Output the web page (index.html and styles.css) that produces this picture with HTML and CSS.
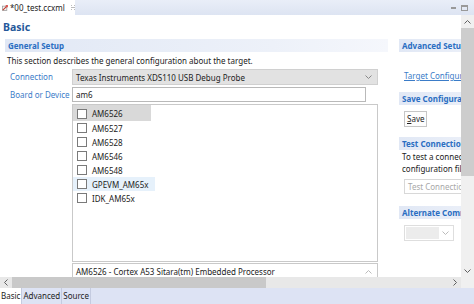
FILE: index.html
```html
<!DOCTYPE html>
<html lang="en">
<head>
    <meta charset="UTF-8">
    <title>*00_test.ccxml</title>
    <link rel="stylesheet" href="styles.css">
</head>
<body>
    <!-- Pestaña del editor -->
    <div class="editor-tabs">
        <div class="editor-tab">
            <svg class="file-icon" width="8" height="8" viewBox="0 0 8 8">
                <rect x="0.5" y="1.5" width="6" height="6" fill="#f3f3f3" stroke="#999"/>
                <path d="M1 7 L6 2" stroke="#c0392b" stroke-width="1.4"/>
                <rect x="5" y="0" width="3" height="3" fill="#d9534f"/>
            </svg>
            <span>*00_test.ccxml</span>
            <span class="tab-close"></span>
        </div>
        <div class="tab-fill"></div>
        <div class="win-buttons">
            <span class="win-min"></span>
            <span class="win-max"></span>
        </div>
    </div>

    <div class="main">
        <div class="content">
            <div class="left-col">
                <div class="page-title">Basic</div>
                <div class="section">
                    <div class="section-header">General Setup</div>
                    <div class="section-desc">This section describes the general configuration about the target.</div>
                    <div class="form">
                        <label class="form-label">Connection</label>
                        <div class="combo">
                            <span>Texas Instruments XDS110 USB Debug Probe</span>
                            <svg width="7" height="4" viewBox="0 0 7 4"><path d="M0.5 0.5 L3.5 3.5 L6.5 0.5" fill="none" stroke="#888"/></svg>
                        </div>
                        <label class="form-label">Board or Device</label>
                        <div class="input-wrap"><div class="text-input">am6</div></div>
                        <div></div>
                        <div class="device-list">
                            <div class="device selected"><span class="check"></span>AM6526</div>
                            <div class="device"><span class="check"></span>AM6527</div>
                            <div class="device"><span class="check"></span>AM6528</div>
                            <div class="device"><span class="check"></span>AM6546</div>
                            <div class="device"><span class="check"></span>AM6548</div>
                            <div class="device hover"><span class="check"></span>GPEVM_AM65x</div>
                            <div class="device"><span class="check"></span>IDK_AM65x</div>
                        </div>
                        <div></div>
                        <div class="device-desc">
                            <span>AM6526 - Cortex A53 Sitara(tm) Embedded Processor</span>
                            <svg width="7" height="4" viewBox="0 0 7 4"><path d="M0.5 3.5 L3.5 0.5 L6.5 3.5" fill="none" stroke="#bbb"/></svg>
                        </div>
                    </div>
                </div>
            </div>

            <div class="right-col">
                <div class="side-header first">Advanced Setup</div>
                <a class="side-link">Target Configuration</a>
                <div class="side-header">Save Configuration</div>
                <div class="side-body save-body">
                    <button class="btn"><u>S</u>ave</button>
                </div>
                <div class="side-header">Test Connection</div>
                <div class="side-text">To test a connection, all changes must have been saved,<br>configuration file contains no errors</div>
                <div class="side-body test-body">
                    <div class="btn-disabled">Test Connection</div>
                </div>
                <div class="side-header">Alternate Communication</div>
                <div class="side-body alt-body">
                    <div class="combo-disabled">
                        <span class="combo-disabled-field"></span>
                        <svg width="7" height="4" viewBox="0 0 7 4"><path d="M0.5 0.5 L3.5 3.5 L6.5 0.5" fill="none" stroke="#bbb"/></svg>
                    </div>
                </div>
            </div>
        </div>

        <!-- Barra de desplazamiento vertical -->
        <div class="vscroll">
            <svg class="arrow" width="7" height="4" viewBox="0 0 7 4"><path d="M0.5 3.5 L3.5 0.5 L6.5 3.5" fill="none" stroke="#606060"/></svg>
            <div class="vthumb"></div>
            <div class="vtrack"></div>
            <svg class="arrow" width="7" height="4" viewBox="0 0 7 4"><path d="M0.5 0.5 L3.5 3.5 L6.5 0.5" fill="none" stroke="#606060"/></svg>
        </div>
    </div>

    <!-- Barra de desplazamiento horizontal -->
    <div class="hscroll">
        <span class="harrow"><svg width="4" height="7" viewBox="0 0 4 7"><path d="M3.5 0.5 L0.5 3.5 L3.5 6.5" fill="none" stroke="#606060"/></svg></span>
        <div class="hthumb"></div>
        <div class="htrack"></div>
        <span class="harrow"><svg width="4" height="7" viewBox="0 0 4 7"><path d="M0.5 0.5 L3.5 3.5 L0.5 6.5" fill="none" stroke="#606060"/></svg></span>
        <div class="hcorner"></div>
    </div>

    <!-- Pestañas inferiores -->
    <div class="page-tabs">
        <div class="page-tab active">Basic</div>
        <div class="page-tab">Advanced</div>
        <div class="page-tab">Source</div>
    </div>
</body>
</html>
```

FILE: styles.css
```css
/* Estilos base */
body {
    margin: 0;
    padding: 0;
    width: 474px;
    height: 304px;
    overflow: hidden;
    background: #fff;
    font-family: "Noto Sans", "Open Sans", sans-serif;
    font-size: 8px;
    color: #222;
}

/* Pestaña del editor */
.editor-tabs {
    display: flex;
    height: 15px;
    background: linear-gradient(#e9eef8, #dde4f2);
}

.editor-tab {
    display: flex;
    align-items: center;
    gap: 2px;
    width: 75px;
    padding-left: 2px;
    box-sizing: border-box;
    background: #fff;
}

.tab-close {
    width: 5px;
    height: 5px;
    margin-left: 4px;
    border-left: 1px dotted #bbb;
    border-right: 1px dotted #bbb;
    box-sizing: border-box;
    background: linear-gradient(#bbb, #bbb) center / 5px 1px no-repeat;
}

.tab-fill {
    flex: 1;
}

.win-buttons {
    display: flex;
    align-items: center;
    gap: 5px;
    padding-right: 6px;
}

.win-min {
    width: 5px;
    height: 2px;
    border-top: 1px solid #999;
    border-bottom: 1px solid #999;
    box-sizing: border-box;
}

.win-max {
    width: 7px;
    height: 6px;
    border: 1px solid #999;
    border-top-width: 2px;
    box-sizing: border-box;
}

/* Contenedor principal */
.main {
    display: flex;
    height: 262px;
}

.content {
    flex: 1;
    display: flex;
    overflow: hidden;
}

.left-col {
    width: 388px;
    flex-shrink: 0;
}

.page-title {
    height: 24px;
    padding: 5px 0 0 3px;
    box-sizing: border-box;
    font-size: 10.5px;
    font-weight: bold;
    color: #24589a;
    line-height: 14px;
}

.section {
    margin-left: 5px;
}

.section-header,
.side-header {
    height: 13px;
    line-height: 13px;
    padding-left: 3px;
    font-weight: bold;
    color: #2a6ec2;
    background: linear-gradient(to right, #e1e8f5, #edf1f9 70%, #f5f7fc);
    white-space: nowrap;
}

.section-desc {
    padding: 3px 0 0 2px;
    height: 17px;
    box-sizing: border-box;
    line-height: 12px;
    white-space: nowrap;
}

/* Formulario */
.form {
    display: grid;
    grid-template-columns: 67px 306px;
    row-gap: 2px;
}

.form-label {
    padding-left: 5px;
    color: #3b7cc8;
    line-height: 15px;
    white-space: nowrap;
}

.combo {
    display: flex;
    align-items: center;
    justify-content: space-between;
    height: 16px;
    padding: 0 5px 0 3px;
    background: #e2e2e2;
    border: 1px solid #d0d0d0;
    box-sizing: border-box;
}

.input-wrap {
    padding-right: 12px;
}

.text-input {
    height: 15px;
    line-height: 13px;
    padding-left: 3px;
    border: 1px solid #b9b9b9;
    box-sizing: border-box;
}

.device-list {
    height: 158px;
    border: 1px solid #c9c9c9;
    box-sizing: border-box;
}

.device {
    display: flex;
    align-items: center;
    width: 78px;
    height: 14px;
    padding-left: 4px;
    gap: 5px;
}

.device.selected {
    background: #d9d9d9;
    height: 16px;
    padding-top: 1px;
    box-sizing: border-box;
}

.device.hover {
    background: #e6f1fb;
}

.check {
    width: 10px;
    height: 10px;
    border: 1px solid #7a7a7a;
    background: #fff;
    box-sizing: border-box;
}

.device-desc {
    display: flex;
    align-items: center;
    justify-content: space-between;
    height: 16px;
    margin-top: -1px;
    padding: 0 5px 0 3px;
    border: 1px solid #c9c9c9;
    border-bottom: none;
    box-sizing: border-box;
    white-space: nowrap;
}

/* Columna derecha */
.right-col {
    flex-shrink: 0;
    width: 120px;
    margin-left: 11px;
    white-space: nowrap;
}

.side-header.first {
    margin-top: 24px;
}

.side-link {
    display: block;
    height: 40px;
    padding: 18px 0 0 5px;
    box-sizing: border-box;
    line-height: 12px;
    color: #3b7cc8;
    text-decoration: underline;
}

.side-body {
    padding-left: 5px;
}

.save-body {
    padding-top: 6px;
    padding-bottom: 10px;
}

.btn {
    display: block;
    font-family: inherit;
    font-size: 8px;
    height: 16px;
    padding: 0 2px;
    line-height: 12px;
    background: #fdfdfd;
    border: 1px solid #c6c6c6;
    color: #222;
}

.side-text {
    padding: 1px 0 0 3px;
    line-height: 12px;
}

.test-body {
    padding-top: 4px;
    padding-bottom: 12px;
}

.btn-disabled {
    width: 110px;
    height: 15px;
    line-height: 13px;
    padding-left: 3px;
    border: 1px solid #d8d8d8;
    box-sizing: border-box;
    color: #a8a8a8;
}

.alt-body {
    padding-top: 6px;
}

.combo-disabled {
    display: flex;
    align-items: center;
    width: 50px;
    height: 16px;
    border: 1px solid #dedede;
    box-sizing: border-box;
    gap: 3px;
    padding: 1px 4px 1px 1px;
}

.combo-disabled-field {
    flex: 1;
    height: 100%;
    background: #ececec;
}

/* Barras de desplazamiento */
.vscroll {
    width: 13px;
    display: flex;
    flex-direction: column;
    align-items: center;
    background: #f0f0f0;
}

.arrow {
    margin: 5px 0 4px;
}

.vthumb {
    width: 13px;
    height: 148px;
    background: #cdcdcd;
}

.vtrack {
    flex: 1;
}

.hscroll {
    display: flex;
    align-items: center;
    height: 11px;
    background: #e8e8e8;
}

.harrow {
    display: flex;
    justify-content: center;
    width: 12px;
}

.hthumb {
    width: 254px;
    height: 11px;
    background: #c9c9c9;
}

.htrack {
    flex: 1;
}

.hcorner {
    width: 13px;
    height: 11px;
    background: #f0f0f0;
}

/* Pestañas inferiores */
.page-tabs {
    display: flex;
    height: 16px;
    background: #dde3f4;
}

.page-tab {
    padding: 0 1px;
    line-height: 16px;
    border-right: 1px solid #c4cbe0;
}

.page-tab.active {
    background: #fff;
}
```
